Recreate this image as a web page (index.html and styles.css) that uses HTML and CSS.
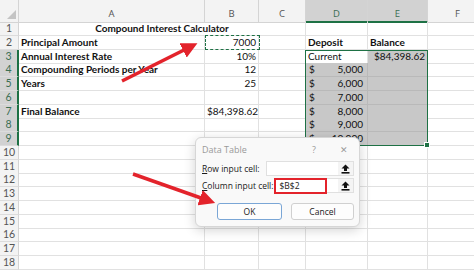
FILE: index.html
```html
<!DOCTYPE html>
<html lang="en">
<head>
    <meta charset="UTF-8">
    <title>Compound Interest Calculator - Data Table</title>
    <link rel="stylesheet" href="styles.css">
</head>
<body>
    <div class="sheet">
        <!-- Column headers -->
        <div class="row head-row">
            <div class="corner"><span class="corner-tri"></span></div>
            <div class="col-head">A</div>
            <div class="col-head">B</div>
            <div class="col-head">C</div>
            <div class="col-head sel">D</div>
            <div class="col-head sel">E</div>
            <div class="col-head">F</div>
        </div>

        <div class="row">
            <div class="row-head">1</div>
            <div class="cell bold center span3">Compound Interest Calculator</div>
            <div class="cell"></div><div class="cell"></div><div class="cell"></div>
        </div>
        <div class="row">
            <div class="row-head">2</div>
            <div class="cell bold">Principal Amount</div>
            <div class="cell num">7000</div>
            <div class="cell"></div>
            <div class="cell bold">Deposit</div>
            <div class="cell bold">Balance</div>
            <div class="cell"></div>
        </div>
        <div class="row">
            <div class="row-head sel">3</div>
            <div class="cell bold">Annual Interest Rate</div>
            <div class="cell num">10%</div>
            <div class="cell"></div>
            <div class="cell active">Current</div>
            <div class="cell num shade">$84,398.62</div>
            <div class="cell"></div>
        </div>
        <div class="row">
            <div class="row-head sel">4</div>
            <div class="cell bold">Compounding Periods per Year</div>
            <div class="cell num">12</div>
            <div class="cell"></div>
            <div class="cell shade money"><span>$</span><span>5,000</span></div>
            <div class="cell shade"></div>
            <div class="cell"></div>
        </div>
        <div class="row">
            <div class="row-head sel">5</div>
            <div class="cell bold">Years</div>
            <div class="cell num">25</div>
            <div class="cell"></div>
            <div class="cell shade money"><span>$</span><span>6,000</span></div>
            <div class="cell shade"></div>
            <div class="cell"></div>
        </div>
        <div class="row">
            <div class="row-head sel">6</div>
            <div class="cell"></div>
            <div class="cell"></div>
            <div class="cell"></div>
            <div class="cell shade money"><span>$</span><span>7,000</span></div>
            <div class="cell shade"></div>
            <div class="cell"></div>
        </div>
        <div class="row">
            <div class="row-head sel">7</div>
            <div class="cell bold">Final Balance</div>
            <div class="cell num">$84,398.62</div>
            <div class="cell"></div>
            <div class="cell shade money"><span>$</span><span>8,000</span></div>
            <div class="cell shade"></div>
            <div class="cell"></div>
        </div>
        <div class="row">
            <div class="row-head sel">8</div>
            <div class="cell"></div>
            <div class="cell"></div>
            <div class="cell"></div>
            <div class="cell shade money"><span>$</span><span>9,000</span></div>
            <div class="cell shade"></div>
            <div class="cell"></div>
        </div>
        <div class="row">
            <div class="row-head sel">9</div>
            <div class="cell"></div>
            <div class="cell"></div>
            <div class="cell"></div>
            <div class="cell shade money"><span>$</span><span>10,000</span></div>
            <div class="cell shade"></div>
            <div class="cell"></div>
        </div>
        <div class="row"><div class="row-head">10</div><div class="cell"></div><div class="cell"></div><div class="cell"></div><div class="cell"></div><div class="cell"></div><div class="cell"></div></div>
        <div class="row"><div class="row-head">11</div><div class="cell"></div><div class="cell"></div><div class="cell"></div><div class="cell"></div><div class="cell"></div><div class="cell"></div></div>
        <div class="row"><div class="row-head">12</div><div class="cell"></div><div class="cell"></div><div class="cell"></div><div class="cell"></div><div class="cell"></div><div class="cell"></div></div>
        <div class="row"><div class="row-head">13</div><div class="cell"></div><div class="cell"></div><div class="cell"></div><div class="cell"></div><div class="cell"></div><div class="cell"></div></div>
        <div class="row"><div class="row-head">14</div><div class="cell"></div><div class="cell"></div><div class="cell"></div><div class="cell"></div><div class="cell"></div><div class="cell"></div></div>
        <div class="row"><div class="row-head">15</div><div class="cell"></div><div class="cell"></div><div class="cell"></div><div class="cell"></div><div class="cell"></div><div class="cell"></div></div>
        <div class="row"><div class="row-head">16</div><div class="cell"></div><div class="cell"></div><div class="cell"></div><div class="cell"></div><div class="cell"></div><div class="cell"></div></div>
        <div class="row"><div class="row-head">17</div><div class="cell"></div><div class="cell"></div><div class="cell"></div><div class="cell"></div><div class="cell"></div><div class="cell"></div></div>
        <div class="row"><div class="row-head">18</div><div class="cell"></div><div class="cell"></div><div class="cell"></div><div class="cell"></div><div class="cell"></div><div class="cell"></div></div>

        <!-- overlays -->
        <div class="copy-marquee"></div>
        <div class="selection"><span class="fill-handle"></span></div>

        <div class="dialog">
            <div class="dialog-title">
                <span>Data Table</span>
                <span class="title-btns"><span>?</span><span class="close">✕</span></span>
            </div>
            <div class="field">
                <label><u>R</u>ow input cell:</label>
                <div class="input">
                    <span class="value"></span>
                    <span class="pick">
                        <svg width="9" height="10" viewBox="0 0 9 10"><path d="M4.5 0.5 L8.5 4.5 H6 V7 H3 V4.5 H0.5 Z" fill="#111"/><rect x="0.5" y="8" width="8" height="1.6" fill="#111"/></svg>
                    </span>
                </div>
            </div>
            <div class="field">
                <label><u>C</u>olumn input cell:</label>
                <div class="input">
                    <span class="value marked">$B$2</span>
                    <span class="pick">
                        <svg width="9" height="10" viewBox="0 0 9 10"><path d="M4.5 0.5 L8.5 4.5 H6 V7 H3 V4.5 H0.5 Z" fill="#111"/><rect x="0.5" y="8" width="8" height="1.6" fill="#111"/></svg>
                    </span>
                </div>
            </div>
            <div class="dialog-buttons">
                <button class="btn primary">OK</button>
                <button class="btn">Cancel</button>
            </div>
        </div>

        <svg class="arrows" width="474" height="270" viewBox="0 0 474 270">
            <defs>
                <marker id="head" markerUnits="userSpaceOnUse" markerWidth="18" markerHeight="16" refX="1" refY="8" orient="auto">
                    <path d="M0 0 L16 8 L0 16 Z" fill="#e3232b"/>
                </marker>
            </defs>
            <line x1="122" y1="81" x2="184" y2="50" stroke="#e3232b" stroke-width="3.5" marker-end="url(#head)"/>
            <line x1="133" y1="174" x2="201" y2="198" stroke="#e3232b" stroke-width="3.5" marker-end="url(#head)"/>
        </svg>
    </div>
</body>
</html>
```

FILE: styles.css
```css
/* Base styles */
body {
    margin: 0;
    padding: 0;
    background: #fff;
    font-family: Lato, "Open Sans", sans-serif;
    overflow: hidden;
}

.sheet {
    position: relative;
    width: 474px;
    height: 270px;
    overflow: hidden;
}

.row {
    display: grid;
    grid-template-columns: 19px 186px 54px 47px 62px 60px 60px;
    height: 13.78px;
    font-size: 10px;
    line-height: 13px;
}

.head-row {
    height: 22px;
    background: #f3f3f3;
}

.corner {
    position: relative;
    background: #f3f3f3;
    border-right: 1px solid #d4d4d4;
    border-bottom: 1px solid #d4d4d4;
}

.corner-tri {
    position: absolute;
    right: 2px;
    bottom: 3px;
    width: 0;
    height: 0;
    border-left: 9px solid transparent;
    border-bottom: 9px solid #c4c4c4;
}

.col-head {
    padding-top: 7px;
    text-align: center;
    font-family: "Open Sans", sans-serif;
    font-size: 9.5px;
    line-height: 14px;
    color: #555;
    border-right: 1px solid #d4d4d4;
    border-bottom: 1px solid #d4d4d4;
}

.col-head.sel {
    background: #d2d2d2;
    color: #3b6e52;
    border-bottom: 2px solid #1e7145;
}

.row-head {
    background: #f3f3f3;
    color: #555;
    text-align: center;
    font-size: 10.5px;
    border-right: 1px solid #d4d4d4;
    border-bottom: 1px solid #dcdcdc;
}

.row-head.sel {
    background: #d2d2d2;
    color: #3b6e52;
    border-right: 2px solid #1e7145;
}

.cell {
    padding: 0 2px;
    color: #111;
    white-space: nowrap;
    overflow: visible;
    border-right: 1px solid #e1e1e1;
    border-bottom: 1px solid #e1e1e1;
}

.bold {
    font-weight: bold;
}

.center {
    text-align: center;
}

.span3 {
    grid-column: span 3;
}

.num {
    text-align: right;
}

.shade {
    background: #c8c8c8;
    border-color: #b9b9b9;
}

.active {
    background: #fff;
}

.money {
    display: flex;
    justify-content: space-between;
    padding: 0 4px 0 3px;
}

/* Selection and copy marquee */
.selection {
    position: absolute;
    left: 305px;
    top: 49.5px;
    width: 123px;
    height: 96.5px;
    border: 1.5px solid #1e7145;
    box-sizing: border-box;
}

.fill-handle {
    position: absolute;
    right: -3px;
    bottom: -3px;
    width: 4px;
    height: 4px;
    background: #1e7145;
    border: 1px solid #fff;
}

.copy-marquee {
    position: absolute;
    left: 205px;
    top: 35px;
    width: 55px;
    height: 15px;
    border: 1.5px dashed #1e7145;
    box-sizing: border-box;
}

/* Data Table dialog */
.dialog {
    position: absolute;
    left: 195px;
    top: 137px;
    width: 165px;
    height: 90px;
    box-sizing: border-box;
    padding: 0 5px 0 6px;
    background: #f9f9f9;
    border: 1px solid #d6d6d6;
    border-radius: 6px;
    box-shadow: 0 3px 12px rgba(0,0,0,0.18);
    font-family: "Open Sans", sans-serif;
    font-size: 8.5px;
    color: #1a1a1a;
}

.dialog-title {
    display: flex;
    justify-content: space-between;
    align-items: center;
    height: 22px;
    color: #9a9a9a;
    font-size: 9px;
}

.title-btns {
    display: flex;
    gap: 24px;
    padding-right: 6px;
}

.close {
    font-size: 9px;
}

.field {
    display: flex;
    align-items: center;
    justify-content: space-between;
    height: 17px;
}

.field label {
    white-space: nowrap;
}

.input {
    display: flex;
    align-items: center;
    justify-content: space-between;
    width: 88px;
    height: 15px;
    box-sizing: border-box;
    background: #fff;
    border: 1px solid #e0e0e0;
}

.field + .field .input {
    width: 91px;
}

.value {
    flex: 1;
    height: 100%;
    padding-left: 4px;
    box-sizing: border-box;
    line-height: 11px;
}

.value.marked {
    flex: 0 0 53px;
    height: 16px;
    margin-left: -1px;
    border: 2px solid #e3232b;
    line-height: 12px;
}

.pick {
    display: flex;
    align-items: center;
    justify-content: center;
    width: 15px;
    height: 13px;
    background: #f4f4f4;
}

.dialog-buttons {
    display: flex;
    justify-content: flex-end;
    gap: 9px;
    margin-top: 9px;
}

.btn {
    height: 17px;
    padding: 0;
    font-family: "Open Sans", sans-serif;
    font-size: 8.5px;
    color: #1a1a1a;
    background: #fdfdfd;
    border: 1px solid #d0d0d0;
    border-radius: 3px;
    width: 63px;
}

.btn.primary {
    width: 65px;
    border: 1.5px solid #7aa6d6;
}

.arrows {
    position: absolute;
    left: 0;
    top: 0;
    pointer-events: none;
}
```
